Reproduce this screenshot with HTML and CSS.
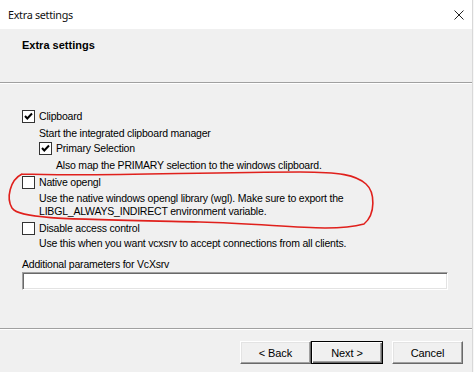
FILE: index.html
```html
<!DOCTYPE html>
<html>
<head>
<meta charset="utf-8">
<link rel="stylesheet" href="styles.css">
</head>
<body>
<div class="window">
  <div class="titlebar">
    <span class="title">Extra settings</span>
    <svg class="close" width="10" height="10" viewBox="0 0 10 10"><path d="M0.5 0.5 L9.5 9.5 M9.5 0.5 L0.5 9.5" stroke="#222" stroke-width="1" fill="none"/></svg>
  </div>
  <div class="header"><div class="htitle">Extra settings</div></div>
  <div class="sep"></div>
  <div class="content">
    <div class="opt l-clip"><span class="cb checked"><svg width="11" height="11" viewBox="0 0 11 11"><path d="M2 5 L4.3 7.5 L9 2.5" stroke="#000" stroke-width="2" fill="none"/></svg></span><span>Clipboard</span></div>
    <div class="desc ind1 l-start">Start the integrated clipboard manager</div>
    <div class="opt ind1 l-prim"><span class="cb checked"><svg width="11" height="11" viewBox="0 0 11 11"><path d="M2 5 L4.3 7.5 L9 2.5" stroke="#000" stroke-width="2" fill="none"/></svg></span><span>Primary Selection</span></div>
    <div class="desc ind2 l-also">Also map the PRIMARY selection to the windows clipboard.</div>
    <div class="opt l-native"><span class="cb"></span><span>Native opengl</span></div>
    <div class="desc ind1 l-use">Use the native windows opengl library (wgl). Make sure to export the</div>
    <div class="desc ind1">LIBGL_ALWAYS_INDIRECT environment variable.</div>
    <div class="opt l-dis"><span class="cb"></span><span>Disable access control</span></div>
    <div class="desc ind1 l-usethis">Use this when you want vcxsrv to accept connections from all clients.</div>
    <div class="desc l-add">Additional parameters for VcXsrv</div>
    <div class="input"></div>
  </div>
  <div class="sep"></div>
  <div class="footer">
    <div class="btn">&lt; Back</div>
    <div class="btn default">Next &gt;</div>
    <div class="btn cancel">Cancel</div>
  </div>
  <svg class="annot" width="474" height="372" viewBox="0 0 474 372"><path d="M22 174 C 10 180, 6 198, 12 208 C 20 219, 60 219, 200 222 C 280 224, 330 233, 364 224 C 376 214, 375 192, 366 184 C 356 175, 340 172, 300 172 C 200 172, 90 177, 22 174" stroke="#e0201c" stroke-width="1.6" fill="none" stroke-linecap="round"/></svg>
</div>
</body>
</html>
```
FILE: styles.css
```css
html, body {
  margin: 0;
  padding: 0;
  background: #f7f7f7;
}
.window {
  position: relative;
  width: 472px;
  height: 372px;
  background: #f0f0f0;
  border-right: 1px solid #d8d8d8;
  display: flex;
  flex-direction: column;
  font-family: "Liberation Sans", Arial, sans-serif;
  font-size: 10.5px;
  letter-spacing: -0.2px;
  color: #000;
}
.titlebar {
  height: 29px;
  flex: none;
  background: #fff;
  display: flex;
  align-items: center;
  justify-content: space-between;
  padding: 0 8px 0 8px;
  font-family: "Noto Sans", "Open Sans", sans-serif;
  font-size: 10.8px;
  letter-spacing: -0.3px;
  color: #111;
}
.header {
  height: 53px;
  flex: none;
  box-sizing: border-box;
  padding: 10px 0 0 22px;
}
.htitle {
  font-weight: bold;
  font-size: 11px;
  letter-spacing: 0;
  line-height: 13px;
}
.sep {
  height: 0;
  flex: none;
  border-top: 1px solid #a0a0a0;
  border-bottom: 1px solid #ffffff;
}
.content {
  flex: 1;
  box-sizing: border-box;
  padding: 26px 0 0 22px;
}
.opt, .desc {
  line-height: 13px;
  height: 13px;
  white-space: nowrap;
}
.opt {
  display: flex;
  align-items: flex-start;
  gap: 4px;
}
.ind1 { margin-left: 17px; }
.ind2 { margin-left: 34px; }
.l-start { margin-top: 4px; }
.l-prim { margin-top: 2px; }
.l-also { margin-top: 4px; }
.l-native { margin-top: 4px; }
.l-use { margin-top: 3px; }
.l-dis { margin-top: 4px; }
.l-usethis { margin-top: 2px; }
.l-add { margin-top: 8px; }
.cb {
  width: 13px;
  height: 13px;
  box-sizing: border-box;
  border: 1px solid #333;
  background: #fff;
  flex: none;
  display: flex;
  align-items: center;
  justify-content: center;
}
.cb svg { display: block; }
.input {
  margin-top: 1px;
  width: 426px;
  height: 18px;
  box-sizing: border-box;
  background: #fff;
  border-top: 1px solid #a0a0a0;
  border-left: 1px solid #a0a0a0;
  border-right: 1px solid #fff;
  border-bottom: 1px solid #fff;
  box-shadow: inset 1px 1px 0 #696969, inset -1px -1px 0 #e3e3e3;
}
.footer {
  height: 42px;
  flex: none;
  box-sizing: border-box;
  padding: 11px 9px 0 0;
  display: flex;
  justify-content: flex-end;
  align-items: flex-start;
}
.btn {
  width: 71px;
  height: 23px;
  box-sizing: border-box;
  display: flex;
  align-items: center;
  justify-content: center;
  background: #f0f0f0;
  border-top: 1px solid #fff;
  border-left: 1px solid #fff;
  border-right: 1px solid #696969;
  border-bottom: 1px solid #696969;
  box-shadow: inset -1px -1px 0 #a0a0a0, inset 1px 1px 0 #e3e3e3;
  font-size: 11px;
  letter-spacing: -0.1px;
}
.btn.default {
  width: 72px;
  border: 1px solid #000;
  box-shadow: inset 1px 1px 0 #fff, inset -1px -1px 0 #696969, inset -2px -2px 0 #a0a0a0;
}
.btn.cancel {
  margin-left: 9px;
}
.annot {
  position: absolute;
  left: 0;
  top: 0;
  pointer-events: none;
}
```
